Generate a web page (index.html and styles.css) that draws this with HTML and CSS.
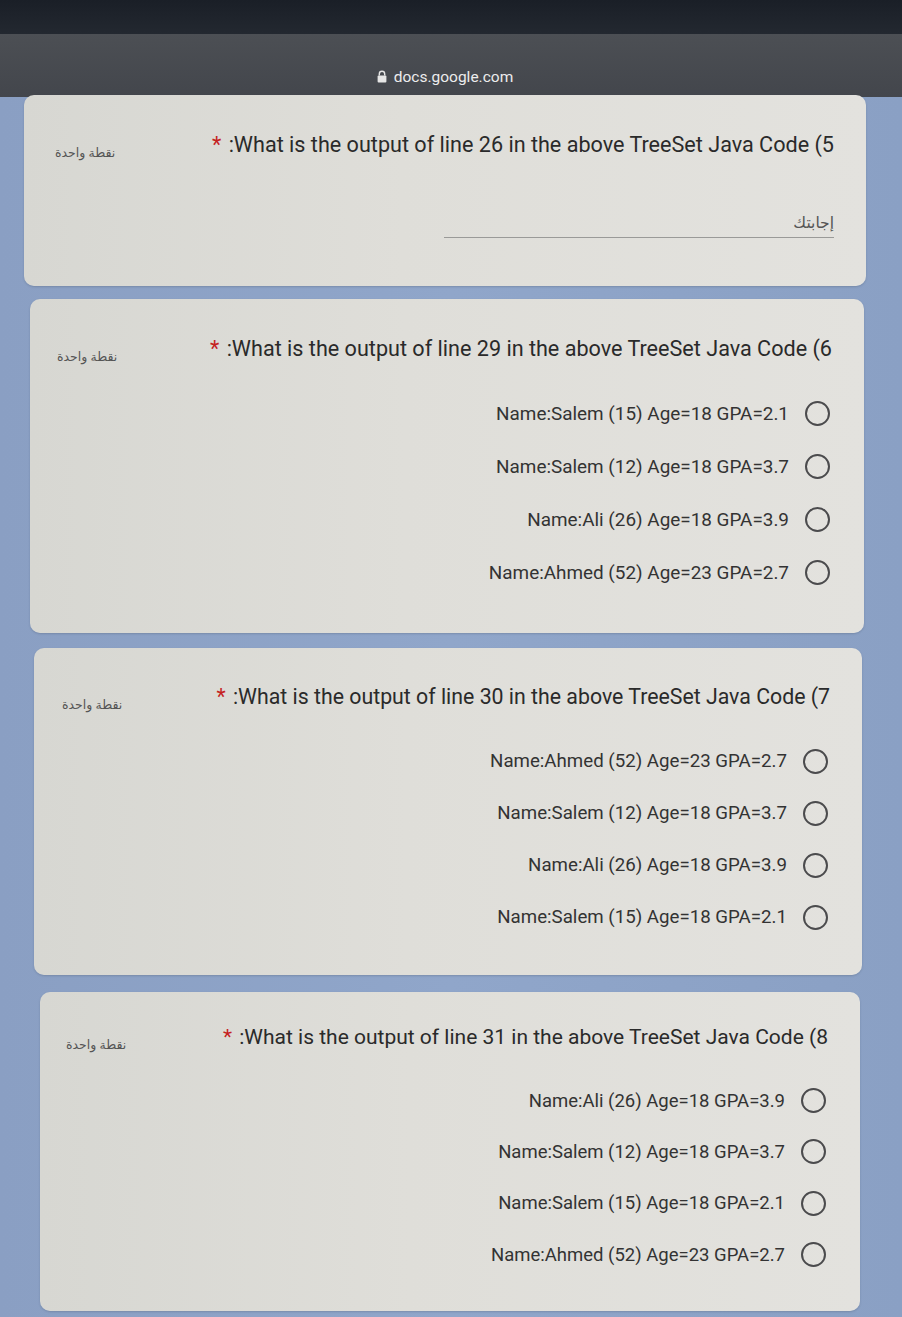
FILE: index.html
```html
<!DOCTYPE html>
<html lang="ar">
<head>
<meta charset="utf-8">
<title>docs.google.com</title>
<link rel="stylesheet" href="styles.css">
</head>
<body>
<header class="bar">
  <div class="bar-top"></div>
  <div class="bar-url">
    <svg class="lock" viewBox="0 0 10 13" width="10" height="13" aria-hidden="true">
      <path d="M2.3 5.6V3.9a2.7 2.7 0 0 1 5.4 0v1.7" fill="none" stroke="#e6e6e6" stroke-width="1.4"/>
      <rect x="0.6" y="5.4" width="8.8" height="7" rx="1" fill="#e6e6e6"/>
    </svg>
    <span>docs.google.com</span>
  </div>
</header>

<main class="list">
  <section class="card card-1">
    <div class="head">
      <span class="points">نقطة واحدة</span>
      <p class="question"><span class="req">*</span> :What is the output of line 26 in the above TreeSet Java Code (5</p>
    </div>
    <div class="answer">
      <span class="answer-hint">إجابتك</span>
    </div>
  </section>

  <section class="card card-2">
    <div class="head">
      <span class="points">نقطة واحدة</span>
      <p class="question"><span class="req">*</span> :What is the output of line 29 in the above TreeSet Java Code (6</p>
    </div>
    <ul class="options">
      <li class="option"><span>Name:Salem (15) Age=18 GPA=2.1</span><i class="radio"></i></li>
      <li class="option"><span>Name:Salem (12) Age=18 GPA=3.7</span><i class="radio"></i></li>
      <li class="option"><span>Name:Ali (26) Age=18 GPA=3.9</span><i class="radio"></i></li>
      <li class="option"><span>Name:Ahmed (52) Age=23 GPA=2.7</span><i class="radio"></i></li>
    </ul>
  </section>

  <section class="card card-3">
    <div class="head">
      <span class="points">نقطة واحدة</span>
      <p class="question"><span class="req">*</span> :What is the output of line 30 in the above TreeSet Java Code (7</p>
    </div>
    <ul class="options">
      <li class="option"><span>Name:Ahmed (52) Age=23 GPA=2.7</span><i class="radio"></i></li>
      <li class="option"><span>Name:Salem (12) Age=18 GPA=3.7</span><i class="radio"></i></li>
      <li class="option"><span>Name:Ali (26) Age=18 GPA=3.9</span><i class="radio"></i></li>
      <li class="option"><span>Name:Salem (15) Age=18 GPA=2.1</span><i class="radio"></i></li>
    </ul>
  </section>

  <section class="card card-4">
    <div class="head">
      <span class="points">نقطة واحدة</span>
      <p class="question"><span class="req">*</span> :What is the output of line 31 in the above TreeSet Java Code (8</p>
    </div>
    <ul class="options">
      <li class="option"><span>Name:Ali (26) Age=18 GPA=3.9</span><i class="radio"></i></li>
      <li class="option"><span>Name:Salem (12) Age=18 GPA=3.7</span><i class="radio"></i></li>
      <li class="option"><span>Name:Salem (15) Age=18 GPA=2.1</span><i class="radio"></i></li>
      <li class="option"><span>Name:Ahmed (52) Age=23 GPA=2.7</span><i class="radio"></i></li>
    </ul>
  </section>
</main>
</body>
</html>
```

FILE: styles.css
```css
* { box-sizing: border-box; }

html, body {
  margin: 0;
  padding: 0;
}

body {
  width: 902px;
  min-height: 1317px;
  background: linear-gradient(90deg, #8a9fc3 0%, #90a6ca 50%, #8aa0c4 100%);
  font-family: Roboto, "DejaVu Sans", "Noto Sans", sans-serif;
  color: #2b2b2b;
  overflow: hidden;
}

.bar {
  display: flex;
  flex-direction: column;
}

.bar-top {
  height: 34px;
  background: linear-gradient(180deg, #1a1f27, #232830);
}

.bar-url {
  height: 63px;
  background: linear-gradient(180deg, #4c4f54, #43464c);
  display: flex;
  justify-content: center;
  align-items: center;
  gap: 7px;
  padding-top: 22px;
  padding-right: 12px;
  color: #ececec;
  font-size: 15.5px;
}

.lock { display: block; margin-top: -1px; }

.list {
  display: flex;
  flex-direction: column;
}

.card {
  background: linear-gradient(90deg, #d7d7d2 0%, #dfded9 45%, #e3e2de 100%);
  border-radius: 10px;
  padding: 36px 32px 32px 28px;
  box-shadow: 0 1px 2px rgba(60, 70, 90, 0.25);
}

.card-1 { margin: -2px 0 0 24px; width: 842px; padding-left: 31px; padding-bottom: 48px; }
.card-2 { margin: 13px 0 0 30px; width: 834px; padding-left: 27px; padding-bottom: 34px; }
.card-3 { margin: 15px 0 0 34px; width: 828px; padding-top: 35px; padding-bottom: 32px; }
.card-4 { margin: 17px 0 0 40px; width: 820px; padding-top: 31px; padding-left: 26px; padding-bottom: 31px; }

.head {
  display: flex;
  justify-content: space-between;
  align-items: flex-start;
  height: 28px;
}

.points {
  font-size: 12.5px;
  line-height: 14px;
  margin-top: 15px;
  color: #555;
  direction: rtl;
}

.question {
  margin: 0;
  font-size: 21.6px;
  line-height: 28px;
  color: #2a2a2a;
  white-space: nowrap;
}

.card-3 .question { font-size: 21.3px; }
.card-4 .question { font-size: 21px; }

.req { color: #c5221f; margin-right: 2px; }

.answer {
  margin: 50px 0 0 auto;
  width: 390px;
  height: 29px;
  border-bottom: 1px solid #9a9a98;
  direction: rtl;
  display: flex;
  align-items: center;
}

.answer-hint {
  font-size: 15.5px;
  color: #555;
}

.options {
  list-style: none;
  margin: 24px 0 0;
  padding: 0;
  display: flex;
  flex-direction: column;
}

.option {
  height: 53px;
  display: flex;
  justify-content: flex-end;
  align-items: center;
  gap: 16px;
  font-size: 18.9px;
  color: #333;
}

.card-3 .option { height: 52px; font-size: 18.7px; }
.card-4 .option { height: 51.3px; font-size: 18.5px; }

.radio {
  display: block;
  width: 25px;
  height: 25px;
  border: 2.5px solid #4b4b4d;
  border-radius: 50%;
  margin-right: 2px;
}
```
